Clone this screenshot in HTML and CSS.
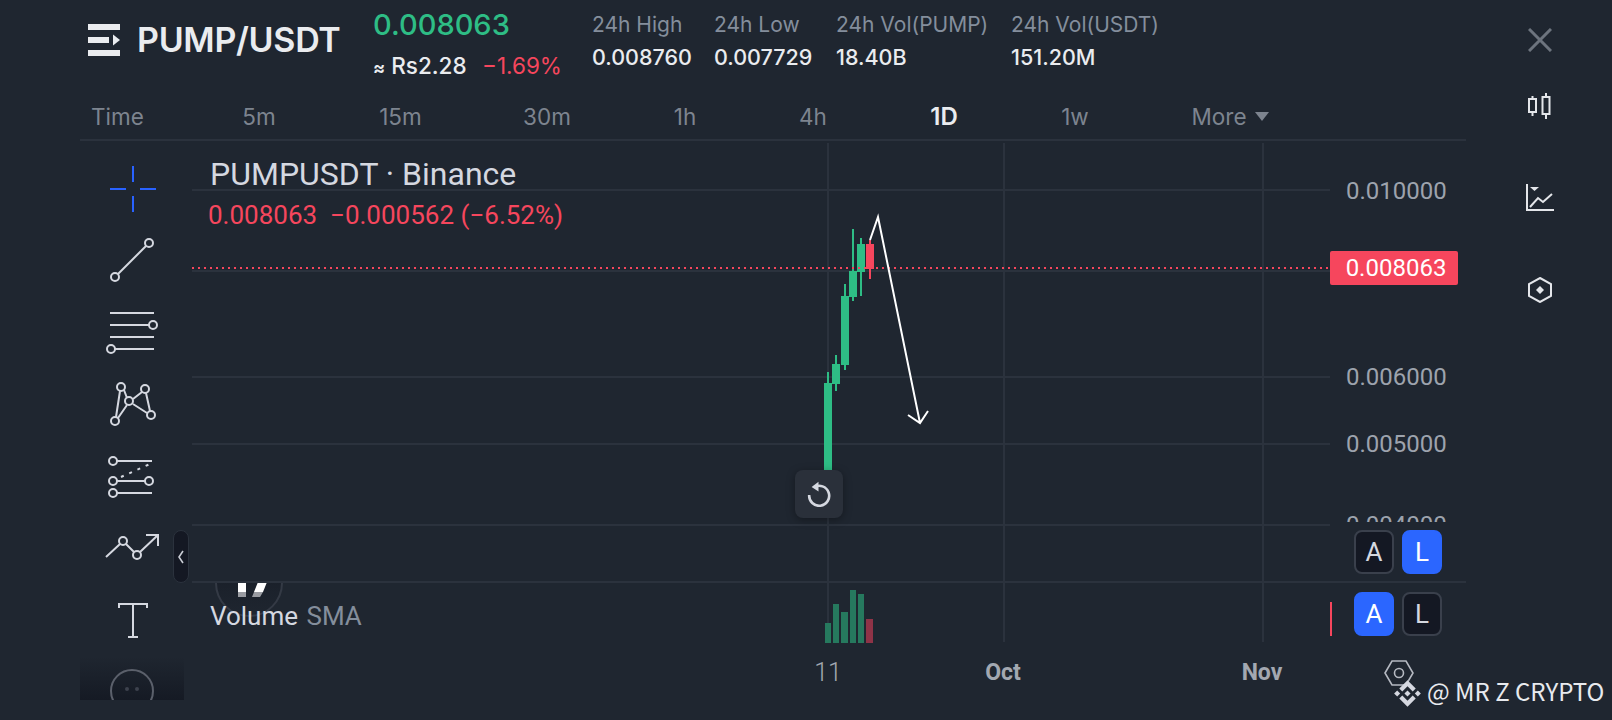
FILE: index.html
```html
<!DOCTYPE html>
<html lang="en">
<head>
    <meta charset="UTF-8">
    <meta name="viewport" content="width=device-width, initial-scale=1.0">
    <title>PUMP/USDT</title>
    <link rel="stylesheet" href="styles.css">
</head>
<body>
    <div class="page">
        <div class="main">
            <!-- Ticker header -->
            <header class="ticker">
                <svg class="menu-icon" width="32" height="32" viewBox="0 0 32 32" fill="#eaecef">
                    <rect x="0" y="0" width="32" height="6"/>
                    <rect x="0" y="13" width="21" height="6"/>
                    <path d="M25 10.5 32 16 25 21.5z"/>
                    <rect x="0" y="26" width="32" height="6"/>
                </svg>
                <h1 class="symbol">PUMP/USDT</h1>
                <div class="price-block">
                    <div class="last-price">0.008063</div>
                    <div class="price-sub">
                        <span class="fiat"><span class="approx">≈</span> Rs2.28</span>
                        <span class="change">−1.69%</span>
                    </div>
                </div>
                <div class="stats">
                    <div class="stat"><div class="stat-label">24h High</div><div class="stat-value">0.008760</div></div>
                    <div class="stat"><div class="stat-label">24h Low</div><div class="stat-value">0.007729</div></div>
                    <div class="stat"><div class="stat-label">24h Vol(PUMP)</div><div class="stat-value">18.40B</div></div>
                    <div class="stat"><div class="stat-label">24h Vol(USDT)</div><div class="stat-value">151.20M</div></div>
                </div>
            </header>

            <!-- Intervals -->
            <nav class="intervals">
                <span class="interval first">Time</span>
                <span class="interval">5m</span>
                <span class="interval">15m</span>
                <span class="interval">30m</span>
                <span class="interval">1h</span>
                <span class="interval">4h</span>
                <span class="interval active">1D</span>
                <span class="interval">1w</span>
                <span class="interval more">More <i class="caret"></i></span>
            </nav>

            <div class="workspace">
                <!-- Drawing tools -->
                <aside class="tools">
                    <svg width="66" height="65" viewBox="100 160 66 65" fill="none" stroke="#2962ff" stroke-width="2">
                        <path d="M133 166v16M133 196v16M110 189h16M140 189h16"/>
                    </svg>
                    <svg width="66" height="70" viewBox="100 225 66 70" fill="none" stroke="#d5d8e0" stroke-width="2">
                        <path d="M118 274 146 246"/>
                        <circle cx="149" cy="243" r="4"/>
                        <circle cx="115" cy="277" r="4"/>
                    </svg>
                    <svg width="66" height="73" viewBox="100 295 66 73" fill="none" stroke="#d5d8e0" stroke-width="2">
                        <path d="M110 313h44M110 325h39M110 337h44M115 349h39"/>
                        <circle cx="153" cy="325" r="4"/>
                        <circle cx="111" cy="349" r="4"/>
                    </svg>
                    <svg width="66" height="72" viewBox="100 368 66 72" fill="none" stroke="#d5d8e0" stroke-width="2">
                        <path d="M120 391 116 417M124 390 127 398M118 418 127 405M133 399 142 392M146 393 150 411M133 404 147 413"/>
                        <circle cx="121" cy="387" r="4"/>
                        <circle cx="145" cy="389" r="4"/>
                        <circle cx="129" cy="401" r="4"/>
                        <circle cx="151" cy="415" r="4"/>
                        <circle cx="115" cy="421" r="4"/>
                    </svg>
                    <svg width="66" height="72" viewBox="100 440 66 72" fill="none" stroke="#d5d8e0" stroke-width="2">
                        <path d="M117 461h35M117 481h28M117 493h35"/>
                        <path d="M121 477 150 464" stroke-dasharray="3 6"/>
                        <circle cx="113" cy="461" r="4"/>
                        <circle cx="113" cy="481" r="4"/>
                        <circle cx="149" cy="481" r="4"/>
                        <circle cx="113" cy="493" r="4"/>
                    </svg>
                    <svg width="66" height="70" viewBox="100 512 66 70" fill="none" stroke="#d5d8e0" stroke-width="2">
                        <path d="M106 557 120 544M126 544 134 552M140 552 158 535M146 535h12v11"/>
                        <circle cx="123" cy="541" r="4"/>
                        <circle cx="137" cy="555" r="4"/>
                    </svg>
                    <svg width="66" height="66" viewBox="100 582 66 66" fill="none" stroke="#d5d8e0" stroke-width="2">
                        <path d="M119 608v-4h28v4M133 604v33M128 637h10"/>
                    </svg>
                    <svg class="more-tools" width="104" height="43" viewBox="80 657 104 43">
                        <defs>
                            <linearGradient id="fade" x1="0" y1="0" x2="0" y2="1">
                                <stop offset="0" stop-color="#1f2630"/>
                                <stop offset="1" stop-color="#151a24"/>
                            </linearGradient>
                        </defs>
                        <rect x="80" y="657" width="104" height="43" fill="url(#fade)"/>
                        <circle cx="132" cy="691" r="21" fill="none" stroke="#5b606b" stroke-width="2"/>
                        <circle cx="127" cy="689" r="2" fill="#3d424d"/>
                        <circle cx="137" cy="689" r="2" fill="#3d424d"/>
                    </svg>
                </aside>

                <button class="collapse">
                    <svg width="8" height="14" viewBox="0 0 8 14" fill="none" stroke="#c9ccd4" stroke-width="1.6">
                        <path d="M6 1 2 7l4 6"/>
                    </svg>
                </button>

                <!-- Chart: the svg viewBox uses page coordinates -->
                <section class="chart">
                    <svg class="chart-canvas" width="1428" height="579" viewBox="184 141 1428 579">
                        <defs>
                            <linearGradient id="logo-fade" x1="0" y1="0" x2="0" y2="1">
                                <stop offset="0" stop-color="#161b25"/>
                                <stop offset="1" stop-color="#1f2630"/>
                            </linearGradient>
                            <clipPath id="logo-clip"><rect x="200" y="582" width="100" height="40"/></clipPath>
                        </defs>

                        <!-- logo under the volume pane -->
                        <g clip-path="url(#logo-clip)">
                            <circle cx="249" cy="583" r="33" fill="url(#logo-fade)" stroke="#343a45" stroke-width="2"/>
                            <rect x="238" y="582" width="8" height="10" fill="#fff"/>
                            <rect x="238" y="592" width="8" height="5" fill="#9a9ca2"/>
                            <path d="M258 582h9l-4 10h-9z" fill="#fff"/>
                            <path d="M254 592h9l-3 5h-8z" fill="#9a9ca2"/>
                        </g>

                        <!-- grid -->
                        <g stroke="#2b323d" stroke-width="2" shape-rendering="crispEdges">
                            <path d="M192 190H1330M192 271H1330M192 377H1330M192 444H1330M192 525H1330M192 582H1466"/>
                            <path d="M828 143V642M1004 143V642M1263 143V642"/>
                        </g>

                        <!-- candles -->
                        <g fill="#2ebd85" shape-rendering="crispEdges">
                            <rect x="827" y="372" width="2" height="12"/>
                            <rect x="824" y="383" width="8" height="87"/>
                            <rect x="835" y="355" width="2" height="36"/>
                            <rect x="832" y="364" width="8" height="20"/>
                            <rect x="844" y="284" width="2" height="86"/>
                            <rect x="841" y="296" width="8" height="69"/>
                            <rect x="852" y="229" width="2" height="72"/>
                            <rect x="849" y="271" width="8" height="26"/>
                            <rect x="860" y="238" width="2" height="58"/>
                            <rect x="857" y="244" width="8" height="28"/>
                        </g>
                        <g fill="#f6465d" shape-rendering="crispEdges">
                            <rect x="869" y="240" width="2" height="39"/>
                            <rect x="866" y="244" width="8" height="25"/>
                        </g>

                        <!-- last price line -->
                        <path d="M192 268H1330" stroke="#f6465d" stroke-width="2" stroke-dasharray="2 4" shape-rendering="crispEdges"/>

                        <!-- volume -->
                        <g fill="#26795e" shape-rendering="crispEdges">
                            <rect x="825" y="623" width="6" height="20"/>
                            <rect x="833" y="604" width="6" height="39"/>
                            <rect x="841" y="612" width="7" height="31"/>
                            <rect x="850" y="590" width="6" height="53"/>
                            <rect x="858" y="594" width="6" height="49"/>
                        </g>
                        <rect x="866" y="619" width="7" height="24" fill="#8f3347"/>
                        <rect x="1330" y="602" width="2" height="34" fill="#f6465d"/>

                        <!-- hand drawn arrow -->
                        <path d="M870 240 878 217 920 423M908 415 920 423 928 411" fill="none" stroke="#fff" stroke-width="2"/>
                    </svg>

                    <div class="legend">
                        <div class="legend-title">PUMPUSDT · Binance</div>
                        <div class="legend-values">0.008063&nbsp; −0.000562 (−6.52%)</div>
                    </div>

                    <div class="price-scale">
                        <span class="scale-label top-10">0.010000</span>
                        <span class="scale-label top-6">0.006000</span>
                        <span class="scale-label top-5">0.005000</span>
                        <span class="scale-label top-4">0.004000</span>
                    </div>
                    <div class="last-badge">0.008063</div>

                    <button class="reset">
                        <svg width="26" height="26" viewBox="0 0 26 26" fill="none" stroke="#d5d8e0" stroke-width="2.6">
                            <path d="M8 6.2A10 10 0 1 1 3.2 14"/>
                            <path d="M12.5 0.8 5.6 6 12.5 10.4z" fill="#d5d8e0" stroke="none"/>
                        </svg>
                    </button>

                    <div class="modes">
                        <span class="mode">A</span>
                        <span class="mode on">L</span>
                        <span class="mode on">A</span>
                        <span class="mode">L</span>
                    </div>

                    <div class="volume-label">Volume <span class="muted">SMA</span></div>

                    <span class="time-label light t-11">11</span>
                    <span class="time-label bold t-oct">Oct</span>
                    <span class="time-label bold t-nov">Nov</span>
                </section>
            </div>
        </div>

        <!-- Right rail -->
        <aside class="rail">
            <svg class="rail-close" width="24" height="24" viewBox="0 0 24 24" fill="none" stroke="#6d747e" stroke-width="3">
                <path d="M1 1 23 23M23 1 1 23"/>
            </svg>
            <svg class="rail-candles" width="28" height="26" viewBox="0 0 28 26" fill="none" stroke="#e4e6ea" stroke-width="2">
                <rect x="3" y="6" width="7" height="13"/>
                <path d="M6.500 3v3M6.500 19v4"/>
                <rect x="16.500" y="4" width="7" height="17"/>
                <path d="M20 0v4M20 21v5"/>
            </svg>
            <svg class="rail-indicator" width="28" height="27" viewBox="0 0 28 27" fill="none" stroke="#e4e6ea">
                <path d="M1 0v26h27" stroke-width="2"/>
                <path d="M4 3h9l-4.500 4z" fill="#e4e6ea" stroke="none"/>
                <path d="M4 23 12 14l5 4 9-8" stroke-width="2"/>
            </svg>
            <svg class="rail-hex" width="24" height="26" viewBox="0 0 24 26" fill="none" stroke="#e4e6ea" stroke-width="2">
                <path d="M12 1 23 7v12L12 25 1 19V7z"/>
                <path d="M12 9 16 13 12 17 8 13z" fill="#e4e6ea" stroke="none"/>
            </svg>
        </aside>

        <!-- Watermark -->
        <div class="watermark">
            <svg class="wm-hex" width="30" height="26" viewBox="0 0 30 26" fill="none" stroke="#b5b9c1" stroke-width="1.6">
                <path d="M1 13 8 1h14l7 12-7 12H8z"/>
                <circle cx="15" cy="13" r="4.500"/>
            </svg>
            <svg class="wm-logo" width="27" height="27" viewBox="0 0 126 126" fill="#d5d8e0">
                <path d="M38.730 53.200 63 28.940l24.280 24.280 14.120-14.120L63 .7 24.610 39.090z"/>
                <path d="M.7 63l14.120-14.120L28.940 63 14.820 77.120z"/>
                <path d="M38.730 72.800 63 97.060l24.280-24.280 14.120 14.120L63 125.300 24.610 86.910z"/>
                <path d="M97.060 63l14.120-14.120L125.300 63l-14.120 14.120z"/>
                <path d="M77.320 63 63 48.680 48.700 63 63 77.320z"/>
            </svg>
            <span class="wm-text">@ MR Z CRYPTO</span>
        </div>
    </div>
</body>
</html>
```

FILE: styles.css
```css
:root {
    --bg: #1f2630;
    --green: #2ebd85;
    --red: #f6465d;
    --blue: #2962ff;
    --muted: #848e9c;
    --text: #eaecef;
    --chart-text: #d5d8e0;
    --grid: #2b323d;
}
* {
    box-sizing: border-box;
}
body {
    margin: 0;
    background-color: var(--bg);
    color: var(--text);
    font-family: 'Inter', 'Liberation Sans', sans-serif;
    overflow: hidden;
}
svg {
    display: block;
}
.page {
    position: relative;
    display: flex;
    width: 1612px;
    height: 720px;
    overflow: hidden;
}
.main {
    width: 1466px;
    padding-left: 80px;
}

/* header */
.ticker {
    display: flex;
    height: 100px;
    padding-left: 8px;
}
.menu-icon {
    margin-top: 24px;
}
.symbol {
    width: 236px;
    margin: 22px 0 0 17px;
    font-size: 34px;
    line-height: 36px;
    font-weight: 600;
    letter-spacing: -0.3px;
}
.price-block {
    width: 219px;
    padding-top: 9px;
}
.last-price {
    color: var(--green);
    font-size: 29px;
    line-height: 32px;
    font-weight: 500;
}
.price-sub {
    display: flex;
    margin-top: 12px;
    font-size: 22.5px;
    line-height: 26px;
}
.fiat {
    width: 109px;
    font-weight: 500;
}
.approx {
    font-size: 18px;
    font-weight: 700;
}
.change {
    color: var(--red);
}
.stats {
    display: grid;
    grid-template-columns: 122px 122px 175px auto;
    padding-top: 13px;
}
.stat-label {
    color: var(--muted);
    font-size: 21px;
    line-height: 24px;
}
.stat-value {
    margin-top: 8px;
    font-size: 21.5px;
    line-height: 24px;
    font-weight: 500;
}

/* intervals */
.intervals {
    display: grid;
    grid-template-columns: 108.5px 141px 142px 151px 125px 131px 131px 131px auto;
    align-items: center;
    height: 41px;
    padding-bottom: 6px;
    border-bottom: 2px solid var(--grid);
    color: #7d848f;
    font-size: 22.5px;
}
.interval {
    text-align: center;
}
.interval.first {
    padding-left: 11px;
    text-align: left;
}
.interval.active {
    color: var(--text);
    font-size: 24px;
    font-weight: 600;
}
.interval.more {
    display: flex;
    align-items: center;
    gap: 8px;
    padding-left: 51px;
}
.caret {
    width: 0;
    height: 0;
    border-left: 7px solid transparent;
    border-right: 7px solid transparent;
    border-top: 9px solid #7d848f;
}

/* tools */
.workspace {
    position: relative;
    display: flex;
    height: 579px;
}
.tools {
    flex: none;
    width: 104px;
    padding: 19px 0 0 20px;
}
.more-tools {
    margin: 9px 0 0 -20px;
}
.collapse {
    position: absolute;
    left: 93px;
    top: 389px;
    display: flex;
    align-items: center;
    justify-content: center;
    width: 16px;
    height: 53px;
    padding: 0;
    background-color: #141823;
    border: 1px solid #2b323d;
    border-radius: 8px;
}

/* chart, free canvas */
.chart {
    position: relative;
    flex: none;
    width: 1428px;
    height: 579px;
    font-family: 'Roboto', 'Liberation Sans', sans-serif;
}
.chart-canvas {
    position: absolute;
    left: 0;
    top: 0;
}
.legend {
    position: absolute;
    left: 26px;
    top: 14px;
    color: var(--chart-text);
}
.legend-title {
    font-size: 32px;
    line-height: 38px;
}
.legend-values {
    margin: 6px 0 0 -2px;
    color: var(--red);
    font-size: 26px;
    line-height: 32px;
}
.price-scale {
    position: absolute;
    left: 1162px;
    top: 0;
    width: 110px;
    height: 381px;
    overflow: hidden;
}
.scale-label {
    position: absolute;
    left: 0;
    color: #9da3ad;
    font-size: 24px;
    line-height: 28px;
}
.top-10 { top: 36px; }
.top-6 { top: 222px; }
.top-5 { top: 289px; }
.top-4 { top: 370px; }
.last-badge {
    position: absolute;
    left: 1146px;
    top: 110px;
    width: 128px;
    height: 34px;
    padding-left: 4px;
    background-color: var(--red);
    border-radius: 2px;
    color: #fff;
    font-size: 24px;
    line-height: 34px;
    text-align: center;
}
.reset {
    position: absolute;
    left: 611px;
    top: 329px;
    display: flex;
    align-items: center;
    justify-content: center;
    width: 48px;
    height: 48px;
    padding: 0;
    background-color: #2a303a;
    border: none;
    border-radius: 8px;
    box-shadow: 0 2px 8px rgba(0, 0, 0, 0.35);
}
.modes {
    position: absolute;
    left: 1170px;
    top: 389px;
    display: grid;
    grid-template-columns: 40px 40px;
    grid-auto-rows: 44px;
    gap: 18px 8px;
}
.mode {
    display: flex;
    align-items: center;
    justify-content: center;
    background-color: #141823;
    border: 2px solid #3a404c;
    border-radius: 8px;
    color: var(--chart-text);
    font-size: 26px;
}
.mode.on {
    background-color: #2b66ff;
    border-color: #2b66ff;
    color: #fff;
}
.volume-label {
    position: absolute;
    left: 26px;
    top: 459px;
    color: var(--chart-text);
    font-size: 26px;
    line-height: 32px;
    word-spacing: 2px;
}
.muted {
    color: var(--muted);
}
.time-label {
    position: absolute;
    top: 518px;
    width: 80px;
    color: #a3a8b1;
    font-size: 23px;
    line-height: 28px;
    text-align: center;
}
.time-label.bold {
    font-weight: 700;
}
.time-label.light {
    font-size: 25px;
    font-weight: 300;
}
.t-11 { left: 604px; }
.t-oct { left: 779px; }
.t-nov { left: 1038px; }

/* right rail */
.rail {
    flex: none;
    display: flex;
    flex-direction: column;
    width: 146px;
    padding: 28px 0 0 60px;
}
.rail-close {
    margin-left: 2px;
}
.rail-candles {
    margin-top: 41px;
    margin-left: 0;
}
.rail-indicator {
    margin-top: 65px;
}
.rail-hex {
    margin-top: 66px;
    margin-left: 2px;
}

/* watermark */
.watermark {
    position: absolute;
    left: 1384px;
    top: 660px;
    width: 228px;
    height: 60px;
}
.wm-hex {
    position: absolute;
    left: 0;
    top: 0;
}
.wm-logo {
    position: absolute;
    left: 10px;
    top: 20px;
}
.wm-text {
    position: absolute;
    left: 43px;
    top: 14px;
    color: #e8eaee;
    font-family: 'Noto Sans CJK SC', 'Noto Sans', sans-serif;
    font-size: 24px;
    line-height: 34px;
    white-space: nowrap;
}
```
